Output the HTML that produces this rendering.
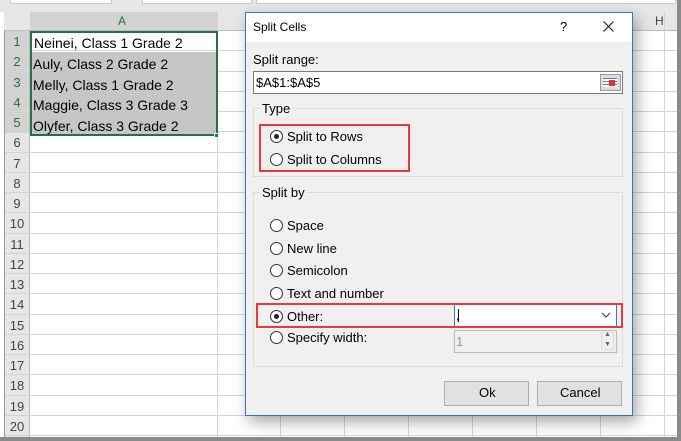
<!DOCTYPE html>
<html><head><meta charset="utf-8"><style>
*{margin:0;padding:0;box-sizing:border-box}
body{width:681px;height:441px;overflow:hidden;background:#fff;position:relative;font-family:"Liberation Sans",sans-serif}
.a{position:absolute}
.t{position:absolute;font-size:12px;color:#000;white-space:nowrap}
.rad{position:absolute;width:13px;height:13px;border:1px solid #333;border-radius:50%;background:#fff}
.rad.on::after{content:"";position:absolute;left:3px;top:3px;width:5px;height:5px;border-radius:50%;background:#222}
</style></head><body>
<div class="a" style="left:0;top:0;width:681px;height:12px;background:#e6e6e6"></div>
<div class="a" style="left:10px;top:0;width:102px;height:4px;background:#fff;border:1px solid #ccc;border-top:0"></div>
<div class="a" style="left:142px;top:0;width:110px;height:4px;background:#fff;border:1px solid #ccc;border-top:0"></div>
<div class="a" style="left:256px;top:0;width:420px;height:4px;background:#fff;border:1px solid #ccc;border-top:0"></div>
<div class="a" style="left:4px;top:12px;width:673px;height:19px;background:#e6e6e6;border-bottom:1px solid #bbb"></div>
<div class="a" style="left:30px;top:12px;width:187px;height:19px;background:#d2d2d2;border-bottom:1px solid #bbb"></div>
<div class="t" style="left:118px;top:14px;color:#217346">A</div>
<div class="t" style="left:655px;top:14px;color:#444">H</div>
<div class="a" style="left:4px;top:31px;width:26px;height:406px;background:#e6e6e6;border-right:1px solid #bbb;border-left:1px solid #999"></div>
<div class="a" style="left:5px;top:31px;width:24px;height:102px;background:#d2d2d2"></div>
<svg class="a" style="left:0;top:0" width="681" height="441">
<g stroke="#d4d4d4" stroke-width="1">
<line x1="217.5" y1="12" x2="217.5" y2="437"/>
<line x1="280.5" y1="12" x2="280.5" y2="437"/>
<line x1="344.5" y1="12" x2="344.5" y2="437"/>
<line x1="408.5" y1="12" x2="408.5" y2="437"/>
<line x1="472.5" y1="12" x2="472.5" y2="437"/>
<line x1="536.5" y1="12" x2="536.5" y2="437"/>
<line x1="600.5" y1="12" x2="600.5" y2="437"/>
<line x1="664.5" y1="12" x2="664.5" y2="437"/>
</g>
</svg>
<div id="grid"></div>
<div class="a" style="left:31px;top:52px;width:186px;height:82px;background:#c6c6c6"></div>
<div class="a" style="left:30px;top:31px;width:188px;height:105px;border:2px solid #217346"></div>
<div class="a" style="left:214px;top:133px;width:5px;height:5px;background:#217346;border:1px solid #fff"></div>
<div class="t" style="left:34px;top:35px;font-size:14px">Neinei, Class 1 Grade 2</div>
<div class="t" style="left:33px;top:56px;font-size:14px">Auly, Class 2 Grade 2</div>
<div class="t" style="left:33px;top:77px;font-size:14px">Melly, Class 1 Grade 2</div>
<div class="t" style="left:33px;top:97px;font-size:14px">Maggie, Class 3 Grade 3</div>
<div class="t" style="left:33px;top:118px;font-size:14px">Olyfer, Class 3 Grade 2</div>
<script>
var h='';for(var i=1;i<=20;i++){var y=31+(i-1)*20.25;
h+='<div class="a" style="left:5px;top:'+(y+19.25).toFixed(1)+'px;width:672px;height:1px;background:#d4d4d4"></div>';
h+='<div class="t" style="left:5px;width:24px;text-align:center;top:'+(y+3).toFixed(1)+'px;font-size:13px;color:'+(i<=5?'#217346':'#444')+'">'+i+'</div>';}
document.getElementById('grid').innerHTML=h;
</script>
<div class="a" style="left:0;top:437px;width:681px;height:4px;background:#8a8a8a"></div>
<div class="a" style="left:677px;top:0;width:4px;height:441px;background:#8a8a8a"></div>
<div class="a" style="left:245px;top:12px;width:388px;height:404px;background:#f0f0f0;border:1px solid #2b79d0;box-shadow:4px 6px 14px rgba(0,0,0,.35)"></div>
<div class="a" style="left:246px;top:13px;width:386px;height:29px;background:#fff"></div>
<div class="t" style="left:253px;top:20px">Split Cells</div>
<div class="t" style="left:560px;top:19px;font-size:13px">?</div>
<svg class="a" style="left:603px;top:21px" width="11" height="11"><path d="M0.5 0.5 L10.5 10.5 M10.5 0.5 L0.5 10.5" stroke="#222" stroke-width="1.2"/></svg>
<div class="t" style="left:253px;top:52px;font-size:13px">Split range:</div>
<div class="a" style="left:253px;top:71px;width:370px;height:23px;background:#fff;border:1px solid #7a7a7a"></div>
<div class="t" style="left:256px;top:75px;font-size:13px">$A$1:$A$5</div>
<div class="a" style="left:600px;top:74px;width:21px;height:17px;background:#ddd;border:1px solid #999"></div>
<div class="a" style="left:603px;top:78px;width:14px;height:9px;background:repeating-linear-gradient(#4a7fc0 0 1px,#fff 1px 3px)"></div>
<div class="a" style="left:609px;top:80px;width:6px;height:6px;background:#d33"></div>
<div class="a" style="left:253px;top:108px;width:370px;height:69px;border:1px solid #dcdcdc"></div>
<div class="t" style="left:260px;top:101px;font-size:13px;background:#f0f0f0;padding:0 2px">Type</div>
<div class="a" style="left:259px;top:124px;width:151px;height:48px;border:2px solid #e83a3a"></div>
<div class="rad on" style="left:270px;top:130px"></div><div class="t" style="left:287px;top:129px;font-size:13px">Split to Rows</div>
<div class="rad" style="left:270px;top:153px"></div><div class="t" style="left:287px;top:152px;font-size:13px">Split to Columns</div>
<div class="a" style="left:253px;top:192px;width:370px;height:175px;border:1px solid #dcdcdc"></div>
<div class="t" style="left:260px;top:185px;font-size:13px;background:#f0f0f0;padding:0 2px">Split by</div>
<div class="rad" style="left:270px;top:219px"></div><div class="t" style="left:287px;top:218px;font-size:13px">Space</div>
<div class="rad" style="left:270px;top:242px"></div><div class="t" style="left:287px;top:241px;font-size:13px">New line</div>
<div class="rad" style="left:270px;top:264px"></div><div class="t" style="left:287px;top:263px;font-size:13px">Semicolon</div>
<div class="rad" style="left:270px;top:287px"></div><div class="t" style="left:287px;top:286px;font-size:13px">Text and number</div>
<div class="a" style="left:256px;top:303px;width:367px;height:25px;border:2px solid #e83a3a"></div>
<div class="rad on" style="left:270px;top:310px"></div><div class="t" style="left:287px;top:309px;font-size:13px">Other:</div>
<div class="a" style="left:454px;top:305px;width:163px;height:21px;background:#fff;border-left:1px solid #2b79d0;border-right:1px solid #2b79d0"></div>
<div class="a" style="left:458px;top:309px;width:1px;height:13px;background:#000"></div>
<div class="t" style="left:456px;top:309px;font-size:12px">,</div>
<svg class="a" style="left:601px;top:312px" width="10" height="6"><path d="M1 1 L5 5 L9 1" stroke="#333" fill="none"/></svg>
<div class="rad" style="left:270px;top:331px"></div><div class="t" style="left:287px;top:330px;font-size:13px">Specify width:</div>
<div class="a" style="left:454px;top:330px;width:163px;height:23px;background:#f0f0f0;border:1px solid #bbb"></div>
<div class="t" style="left:456px;top:334px;font-size:13px;color:#999">1</div>
<div class="a" style="left:601px;top:332px;width:13px;height:18px;border:1px solid #ddd"></div>
<div class="t" style="left:604px;top:331px;font-size:7px;color:#666">▲</div>
<div class="t" style="left:604px;top:341px;font-size:7px;color:#666">▼</div>
<div class="a" style="left:444px;top:381px;width:85px;height:25px;background:#e1e1e1;border:1px solid #adadad"></div>
<div class="t" style="left:479px;top:385px;font-size:13px">Ok</div>
<div class="a" style="left:537px;top:381px;width:85px;height:25px;background:#e1e1e1;border:1px solid #adadad"></div>
<div class="t" style="left:560px;top:385px;font-size:13px">Cancel</div>
</body></html>
